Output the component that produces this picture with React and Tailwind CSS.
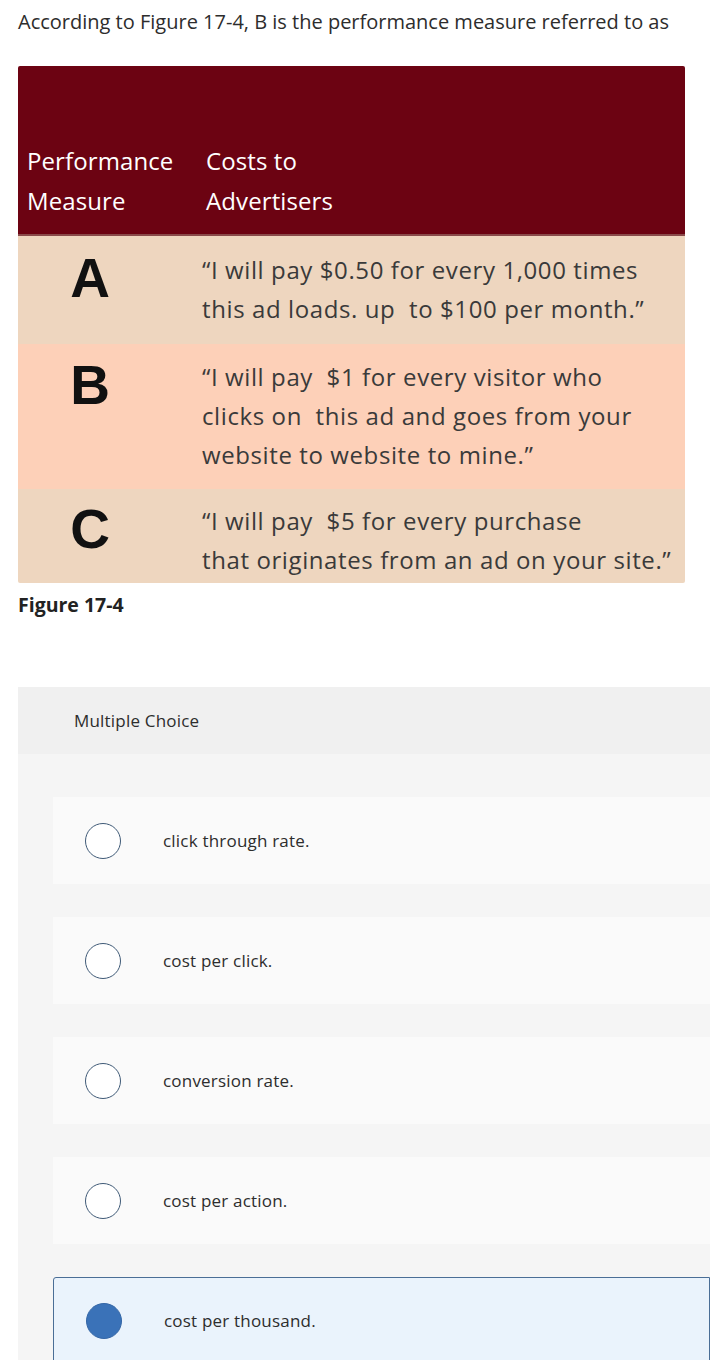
import { useState } from 'react'

// Question card: figure table + multiple choice answers
const rows = [
  { letter: 'A', bg: 'bg-[#eed6bf]', py: 'pt-[14px] pb-[16px]', lines: ['“I will pay $0.50 for every 1,000 times', 'this ad loads. up  to $100 per month.”'] },
  { letter: 'B', bg: 'bg-[#fdd0b8]', py: 'pt-[13px] pb-[15px]', lines: ['“I will pay  $1 for every visitor who', 'clicks on  this ad and goes from your', 'website to website to mine.”'] },
  { letter: 'C', bg: 'bg-[#eed6bf]', py: 'pt-[12px] pb-[4px]', lines: ['“I will pay  $5 for every purchase', 'that originates from an ad on your site.”'] },
]

const options = ['click through rate.', 'cost per click.', 'conversion rate.', 'cost per action.', 'cost per thousand.']

function Radio({ checked }) {
  if (checked) {
    return <span className="block w-9 h-9 shrink-0 rounded-full bg-[#3a72b8] border border-[#3466a6]" />
  }
  return <span className="block w-9 h-9 shrink-0 rounded-full bg-white border border-[#3f5a77]" />
}

export default function App() {
  const [picked, setPicked] = useState(4)

  return (
    <div className="w-[710px] h-[1360px] overflow-hidden bg-white font-['Open_Sans',sans-serif] text-[#2d2d2d]">
      <p className="pl-[18px] pt-[9px] text-[20px] leading-[26px]">
        According to Figure 17-4, B is the performance measure referred to as
      </p>

      {/* figure */}
      <div className="ml-[18px] mt-[31px] w-[667px] rounded-[2px] overflow-hidden">
        <div className="bg-[#6c0312] h-[170px] flex items-end pb-[13px] border-b-2 border-[#8a4a4a] text-white text-[24px] leading-[40px] tracking-[0.1px]">
          <div className="w-[188px] pl-[9px]">
            <div>Performance</div>
            <div>Measure</div>
          </div>
          <div>
            <div>Costs to</div>
            <div>Advertisers</div>
          </div>
        </div>
        {rows.map(r => (
          <div key={r.letter} className={`${r.bg} flex ${r.py}`}>
            <div className="w-[144px] flex justify-center">
              <span className="text-[55px] leading-[56px] font-bold text-[#111] font-['Liberation_Sans',sans-serif]">{r.letter}</span>
            </div>
            <div className="ml-[40px] text-[24px] leading-[39px] tracking-[0.6px] text-[#3a3a3a] whitespace-pre">
              {r.lines.map((l, i) => <div key={i}>{l}</div>)}
            </div>
          </div>
        ))}
      </div>

      <p className="pl-[18px] mt-[9px] text-[19.5px] font-bold text-[#222] leading-[26px]">Figure 17-4</p>

      {/* multiple choice */}
      <div className="ml-[18px] mt-[69px] bg-[#f5f5f5]">
        <div className="bg-[#f0f0f0] h-[67px] flex items-center pl-[56px] text-[17px] tracking-[0.2px] text-[#2d2d2d]">
          Multiple Choice
        </div>
        <div className="pl-[35px] pt-[43px] flex flex-col gap-[33px]">
          {options.map((o, i) => (
            <button
              key={o}
              onClick={() => setPicked(i)}
              className={`h-[87px] flex items-center text-left pl-[32px] ${
                picked === i ? 'bg-[#eaf3fc] border border-[#4a6e96] rounded-tl-[3px]' : 'bg-[#fafafa]'
              }`}
            >
              <Radio checked={picked === i} />
              <span className="ml-[42px] text-[17px] tracking-[0.2px] text-[#2d2d2d]">{o}</span>
            </button>
          ))}
        </div>
      </div>
    </div>
  )
}
